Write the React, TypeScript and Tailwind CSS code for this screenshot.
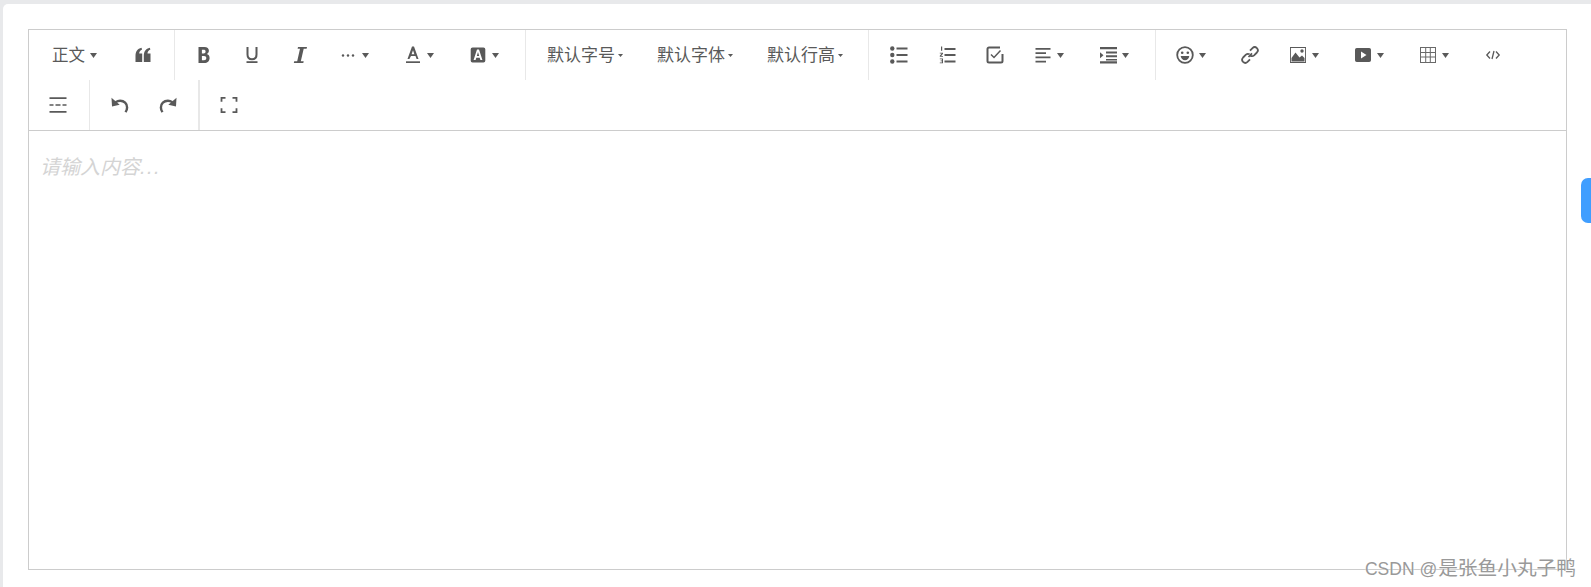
const Caret = ({ small }: { small?: boolean }) => (
  <svg width={small ? 5 : 7} height={small ? 3 : 5} viewBox="0 0 8 5" preserveAspectRatio="none" className="shrink-0 fill-[#595959]">
    <path d="M0 0h8L4 5z" />
  </svg>
)

const Glyph = ({ children }: { children: React.ReactNode }) => (
  <svg width="18" height="18" viewBox="0 0 18 18" className="shrink-0 fill-[#595959] stroke-[#595959] [stroke-width:0]">
    {children}
  </svg>
)

const line = { fill: 'none', strokeWidth: 1.8 }

const icons = {
  quote: (
    <path d="M1.500 16V9.600C1.500 5.500 3.500 2.800 7.500 1.800l.6 1.700C6.100 4.400 5.300 5.800 5.200 7.500h3V16zM9.800 16V9.600c0-4.100 2-6.800 6-7.800l.6 1.700c-2 .9-2.800 2.300-2.900 4h3V16z" />
  ),
  bold: (
    <path
      fillRule="evenodd"
      d="M3.500 1H9.400c2.900 0 4.500 1.500 4.500 3.800 0 1.600-.9 2.800-2.200 3.300 1.800.4 2.900 1.800 2.900 3.800 0 3-2.100 5.100-5.300 5.100H3.500zM6.900 3.700v3.700h1.700c1.300 0 2-.7 2-1.900s-.7-1.800-2-1.800zM6.900 10v4.300h2.100c1.500 0 2.300-.8 2.300-2.200s-.8-2.100-2.300-2.100z"
    />
  ),
  underline: (
    <>
      <path {...line} strokeWidth={2} d="M4.500 1v7.500c0 3.200 1.700 4.800 4.500 4.800s4.500-1.600 4.500-4.800V1" />
      <path d="M3.500 15.200h11V17h-11z" />
    </>
  ),
  italic: <path d="M7 1h9l-.4 1.800h-2.900L9.800 15.200h2.900L12.300 17H2.800l.4-1.800h3L9 2.800H6.600z" />,
  more: (
    <>
      <circle cx="4" cy="9.500" r="1.200" />
      <circle cx="9" cy="9.500" r="1.200" />
      <circle cx="14" cy="9.500" r="1.200" />
    </>
  ),
  color: (
    <>
      <path fillRule="evenodd" d="M8 .5h2L14.500 13h-1.900l-1.100-3.100h-4.500L5.400 13H3.500zM7.600 8.300h2.800L9 4.300z" />
      <path d="M2 15.300h14V17H2z" />
    </>
  ),
  bgColor: (
    <path
      fillRule="evenodd"
      d="M3.500 1.500h11A1.800 1.800 0 0 1 16.300 3.300v11.400a1.800 1.800 0 0 1-1.800 1.800h-11a1.800 1.800 0 0 1-1.800-1.800V3.300A1.800 1.800 0 0 1 3.500 1.500zM8 3.500 4.600 14h2l.7-2.300h3.400l.7 2.300h2L10 3.500zM7.800 10 9 6l1.200 4z"
    />
  ),
  ul: (
    <>
      <circle cx="2.300" cy="2.500" r="2.200" />
      <circle cx="2.300" cy="9" r="2.200" />
      <circle cx="2.300" cy="15.500" r="2.200" />
      <path d="M6.500 1.500h11v2h-11zM6.500 8h11v2h-11zM6.500 14.500h11v2h-11z" />
    </>
  ),
  ol: (
    <>
      <path d="M3 .5h1.200v4.300H3zM1.800 6.700H5v1.100L3.200 9.900H5v.8H1.800v-.9l1.900-2.300H1.800zM1.800 12.500H5v4.800H1.800v-.8h2.100v-1.200H2.600v-.8h1.300v-1.200H1.800z" />
      <path d="M6.500 2h11v2h-11zM6.500 8h11v2h-11zM6.500 14.500h11v2h-11z" />
    </>
  ),
  todo: (
    <>
      <path {...line} strokeWidth={2} d="M14 1.500H3A1.500 1.500 0 0 0 1.500 3v12A1.500 1.500 0 0 0 3 16.500h12a1.500 1.500 0 0 0 1.500-1.500V8" />
      <path {...line} strokeWidth={1.5} d="m5 8.500 3 3 6.500-7" />
    </>
  ),
  align: <path d="M1.500 2h15v1.800h-15zM1.500 6.300h10.500v1.800H1.500zM1.500 10.500h15v1.800h-15zM1.500 14.700h10.500v1.800H1.500z" />,
  indent: (
    <path d="M1 1h17v2.200H1zM7 5.500h11v2H7zM7 9.300h11v2H7zM7 13h11v1.400H7zM1 15.300h17v2.200H1zM1 6.300 4.500 9.300 1 12.300z" />
  ),
  smile: (
    <>
      <circle {...line} cx="9" cy="9" r="7.800" />
      <circle cx="6.200" cy="6.800" r="1.300" />
      <circle cx="11.800" cy="6.800" r="1.300" />
      <path d="M4.700 10h8.600c-.3 2.500-2 4.200-4.300 4.200S5 12.500 4.700 10z" />
    </>
  ),
  link: (
    <>
      <path {...line} d="M7.500 11 11 7.300M9 4.700l2.500-2.600a3.200 3.200 0 0 1 4.400 0 3.200 3.200 0 0 1 0 4.400l-2.800 2.800a3.200 3.200 0 0 1-3.700.4" />
      <path {...line} d="M9 13.300 6.500 15.900a3.200 3.200 0 0 1-4.400 0 3.200 3.200 0 0 1 0-4.400l2.800-2.800a3.200 3.200 0 0 1 3.700-.4" />
    </>
  ),
  image: (
    <>
      <path fillRule="evenodd" d="M1 1h16v16H1zM1.900 1.900v14.200h14.200V1.900z" />
      <circle cx="13" cy="5" r="1.700" />
      <path d="M2.500 15.500V12l4-5.500 4 5 2.500-2 2.500 2.500v3.500z" />
    </>
  ),
  video: (
    <path
      fillRule="evenodd"
      d="M2.800 2h12.400A1.800 1.800 0 0 1 17 3.800v10.400a1.800 1.800 0 0 1-1.800 1.800H2.800A1.800 1.800 0 0 1 1 14.200V3.800A1.800 1.800 0 0 1 2.800 2zM7 5.500v7L12.500 9z"
    />
  ),
  table: (
    <path
      fillRule="evenodd"
      opacity="0.9"
      d="M1 1h16v16H1zM2 2v4h4.200V2zM7.200 2v4h3.600V2zM11.800 2v4H16V2zM2 7v3.500h4.200V7zM7.200 7v3.500h3.600V7zM11.800 7v3.500H16V7zM2 11.500V16h4.200v-4.500zM7.200 11.500V16h3.600v-4.500zM11.800 11.500V16H16v-4.500z"
    />
  ),
  code: <path {...line} strokeWidth={1.3} d="M6 5.500 2.800 9 6 12.500M12 5.500 15.200 9 12 12.500M10 5 8 13" />,
  hr: (
    <>
      <path d="M.5 1.200h17v1.800H.5zM.5 15h17v1.800H.5z" />
      <path d="M.5 8.200h4v1.600h-4zM6.500 8.200h5v1.600h-5zM13.500 8.200h4v1.600h-4z" />
    </>
  ),
  undo: (
    <>
      <path {...line} strokeWidth={2.4} d="M4.500 6.200c1.500-.9 3-1.400 4.600-1.400 4.100 0 7 2.900 7 6.600 0 1.900-.6 3.300-1.600 4.800" />
      <path d="M.5 1.800 1 10.500l7.700-1.800z" />
    </>
  ),
  redo: (
    <>
      <path {...line} strokeWidth={2.4} d="M13.500 6.200c-1.500-.9-3-1.400-4.600-1.400-4.100 0-7 2.900-7 6.600 0 1.900.6 3.300 1.600 4.800" />
      <path d="M17.500 1.800 17 10.500 9.300 8.700z" />
    </>
  ),
  full: <path {...line} d="M5.500 1.800h-4v4M12.500 1.800h4v4M5.500 16.200h-4v-4M12.500 16.200h4v-4" />,
}

const Icon = ({ name, caret }: { name: keyof typeof icons; caret?: boolean }) => (
  <div className={`flex h-full items-center gap-[5px] pl-[15px] ${caret ? 'w-[65px]' : 'w-[48px]'}`}>
    <Glyph>{icons[name]}</Glyph>
    {caret && <Caret />}
  </div>
)

const Select = ({ label }: { label: string }) => (
  <div className="flex h-full w-[110px] items-center gap-[3px] pl-[15px] pt-[1px]">
    <span className="text-[17px] text-[#595959]">{label}</span>
    <Caret small />
  </div>
)

const Group = ({ className, children }: { className: string; children: React.ReactNode }) => (
  <div className={`flex h-full pr-[6px] ${className}`}>{children}</div>
)

export default function App() {
  return (
    <div className="relative h-[587px] overflow-hidden bg-[#e8e9eb] pl-[3px] pt-[4px] font-['Liberation_Sans','Noto_Sans_CJK_SC',sans-serif]">
      <div className="h-full rounded-tl-[5px] bg-white pl-[25px] pt-[25px]">
        <div className="h-[541px] w-[1539px] border border-[#ccc]">
          <div className="border-b border-[#ccc]">
            <div className="flex h-[50px]">
              <Group className="border-r border-[#e8e8e8] pl-[6px] pr-[7px]">
                <div className="flex h-full w-[84px] items-center gap-[5px] pl-[17px] pt-[1px]">
                  <span className="text-[16.5px] text-[#595959]">正文</span>
                  <Caret />
                </div>
                <Icon name="quote" />
              </Group>
              <Group className="border-r border-[#e8e8e8] pl-[5px]">
                <Icon name="bold" />
                <Icon name="underline" />
                <Icon name="italic" />
                <Icon name="more" caret />
                <Icon name="color" caret />
                <Icon name="bgColor" caret />
              </Group>
              <Group className="border-r border-[#e8e8e8] pl-[6px]">
                <Select label="默认字号" />
                <Select label="默认字体" />
                <Select label="默认行高" />
              </Group>
              <Group className="border-r border-[#e8e8e8] pl-[6px]">
                <Icon name="ul" />
                <Icon name="ol" />
                <Icon name="todo" />
                <Icon name="align" caret />
                <Icon name="indent" caret />
              </Group>
              <Group className="pl-[5px]">
                <Icon name="smile" caret />
                <Icon name="link" />
                <Icon name="image" caret />
                <Icon name="video" caret />
                <Icon name="table" caret />
                <Icon name="code" />
              </Group>
            </div>
            <div className="flex h-[50px]">
              <Group className="border-r border-[#e8e8e8] pl-[5px] pr-[7px]">
                <Icon name="hr" />
              </Group>
              <Group className="border-r-2 border-[#e8e8e8] pl-[6px] pr-[5px]">
                <Icon name="undo" />
                <Icon name="redo" />
              </Group>
              <Group className="pl-[5px]">
                <Icon name="full" />
              </Group>
            </div>
          </div>
          <div className="pl-[11px] pt-[21px] text-[20px] leading-[30px] text-[#d4d4d4] italic">
            请输入内容<span className="tracking-[1.5px]">...</span>
          </div>
        </div>
      </div>
      <div className="absolute right-0 top-[178px] h-[45px] w-[10px] rounded-l-[7px] bg-[#409eff]" />
      <div className="absolute right-[15px] top-[554px] flex items-baseline whitespace-nowrap text-[#999] [text-shadow:0_0_2px_#fff]">
        <span className="mr-[1px] text-[17.5px]">CSDN @</span>
        <span className="text-[19.7px]">是张鱼小丸子鸭</span>
      </div>
    </div>
  )
}
